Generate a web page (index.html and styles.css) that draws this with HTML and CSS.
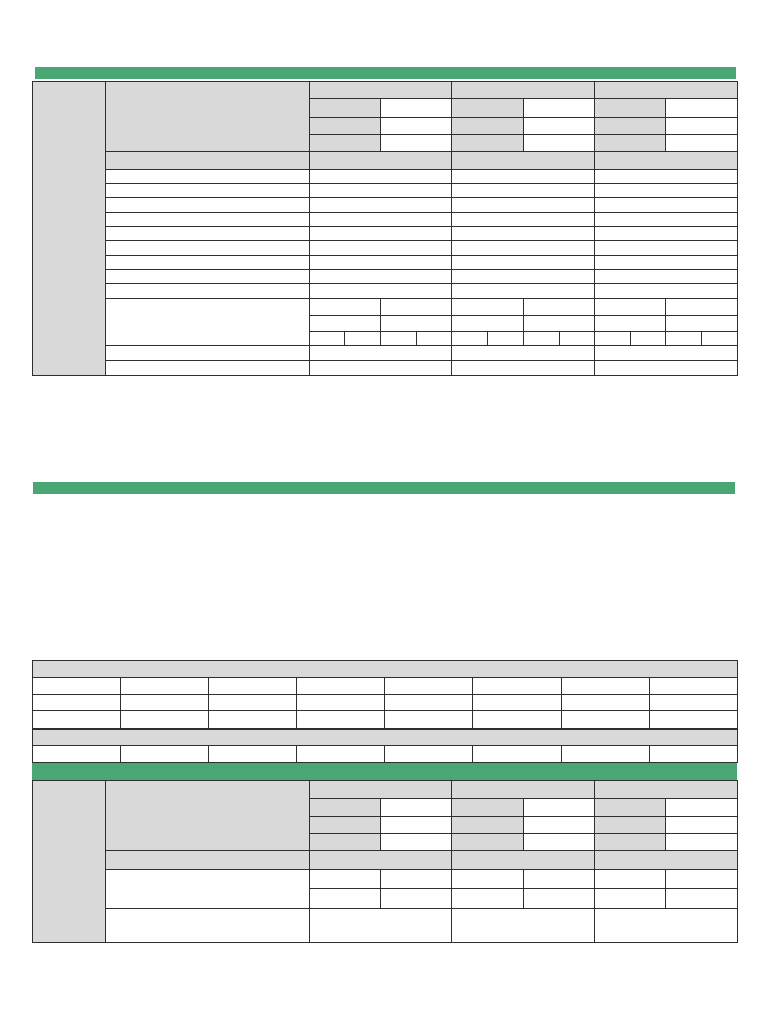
FILE: index.html
```html
<!DOCTYPE html>
<html>
<head>
<meta charset="utf-8">
<link rel="stylesheet" href="styles.css">
</head>
<body>
<div class="page">
  <div class="bar bar-top"></div>
  <table class="grid">
    <colgroup>
      <col class="w73"><col class="w204">
      <col class="w35"><col class="w36"><col class="w36"><col class="w35"><col class="w36"><col class="w36">
      <col class="w36"><col class="w35"><col class="w36"><col class="w35"><col class="w36"><col class="w36">
    </colgroup>
    <tr class="h17"><td class="g" rowspan="19"></td><td class="g" rowspan="4"></td><td class="g" colspan="4"></td><td class="g" colspan="4"></td><td class="g" colspan="4"></td></tr>
    <tr class="h19"><td class="g" colspan="2"></td><td colspan="2"></td><td class="g" colspan="2"></td><td colspan="2"></td><td class="g" colspan="2"></td><td colspan="2"></td></tr>
    <tr class="h17"><td class="g" colspan="2"></td><td colspan="2"></td><td class="g" colspan="2"></td><td colspan="2"></td><td class="g" colspan="2"></td><td colspan="2"></td></tr>
    <tr class="h17"><td class="g" colspan="2"></td><td colspan="2"></td><td class="g" colspan="2"></td><td colspan="2"></td><td class="g" colspan="2"></td><td colspan="2"></td></tr>
    <tr class="h18"><td class="g"></td><td class="g" colspan="4"></td><td class="g" colspan="4"></td><td class="g" colspan="4"></td></tr>
    <tr class="h14"><td></td><td colspan="4"></td><td colspan="4"></td><td colspan="4"></td></tr>
    <tr class="h14"><td></td><td colspan="4"></td><td colspan="4"></td><td colspan="4"></td></tr>
    <tr class="h15"><td></td><td colspan="4"></td><td colspan="4"></td><td colspan="4"></td></tr>
    <tr class="h14"><td></td><td colspan="4"></td><td colspan="4"></td><td colspan="4"></td></tr>
    <tr class="h14"><td></td><td colspan="4"></td><td colspan="4"></td><td colspan="4"></td></tr>
    <tr class="h15"><td></td><td colspan="4"></td><td colspan="4"></td><td colspan="4"></td></tr>
    <tr class="h14"><td></td><td colspan="4"></td><td colspan="4"></td><td colspan="4"></td></tr>
    <tr class="h14"><td></td><td colspan="4"></td><td colspan="4"></td><td colspan="4"></td></tr>
    <tr class="h15"><td></td><td colspan="4"></td><td colspan="4"></td><td colspan="4"></td></tr>
    <tr class="h17"><td rowspan="3"></td><td colspan="2"></td><td colspan="2"></td><td colspan="2"></td><td colspan="2"></td><td colspan="2"></td><td colspan="2"></td></tr>
    <tr class="h16"><td colspan="2"></td><td colspan="2"></td><td colspan="2"></td><td colspan="2"></td><td colspan="2"></td><td colspan="2"></td></tr>
    <tr class="h14"><td></td><td></td><td></td><td></td><td></td><td></td><td></td><td></td><td></td><td></td><td></td><td></td></tr>
    <tr class="h15"><td></td><td colspan="4"></td><td colspan="4"></td><td colspan="4"></td></tr>
    <tr class="h15"><td></td><td colspan="4"></td><td colspan="4"></td><td colspan="4"></td></tr>
  </table>

  <div class="bar bar-mid"></div>

  <table class="grid grid-eight">
    <colgroup>
      <col class="w88"><col class="w88"><col class="w88"><col class="w88"><col class="w88"><col class="w89"><col class="w88"><col class="w88">
    </colgroup>
    <tr class="h17"><td class="g" colspan="8"></td></tr>
    <tr class="h17"><td></td><td></td><td></td><td></td><td></td><td></td><td></td><td></td></tr>
    <tr class="h16"><td></td><td></td><td></td><td></td><td></td><td></td><td></td><td></td></tr>
    <tr class="h18"><td></td><td></td><td></td><td></td><td></td><td></td><td></td><td></td></tr>
    <tr class="h17 thick"><td class="g" colspan="8"></td></tr>
    <tr class="h17"><td></td><td></td><td></td><td></td><td></td><td></td><td></td><td></td></tr>
  </table>
  <div class="bar bar-wide"></div>
  <table class="grid grid-last">
    <colgroup>
      <col class="w73"><col class="w204">
      <col class="w35"><col class="w36"><col class="w36"><col class="w35"><col class="w36"><col class="w36">
      <col class="w36"><col class="w35"><col class="w36"><col class="w35"><col class="w36"><col class="w36">
    </colgroup>
    <tr class="h18"><td class="g" rowspan="8"></td><td class="g" rowspan="4"></td><td class="g" colspan="4"></td><td class="g" colspan="4"></td><td class="g" colspan="4"></td></tr>
    <tr class="h18"><td class="g" colspan="2"></td><td colspan="2"></td><td class="g" colspan="2"></td><td colspan="2"></td><td class="g" colspan="2"></td><td colspan="2"></td></tr>
    <tr class="h17"><td class="g" colspan="2"></td><td colspan="2"></td><td class="g" colspan="2"></td><td colspan="2"></td><td class="g" colspan="2"></td><td colspan="2"></td></tr>
    <tr class="h17"><td class="g" colspan="2"></td><td colspan="2"></td><td class="g" colspan="2"></td><td colspan="2"></td><td class="g" colspan="2"></td><td colspan="2"></td></tr>
    <tr class="h19"><td class="g"></td><td class="g" colspan="4"></td><td class="g" colspan="4"></td><td class="g" colspan="4"></td></tr>
    <tr class="h19"><td rowspan="2"></td><td colspan="2"></td><td colspan="2"></td><td colspan="2"></td><td colspan="2"></td><td colspan="2"></td><td colspan="2"></td></tr>
    <tr class="h20"><td colspan="2"></td><td colspan="2"></td><td colspan="2"></td><td colspan="2"></td><td colspan="2"></td><td colspan="2"></td></tr>
    <tr class="h34"><td></td><td colspan="4"></td><td colspan="4"></td><td colspan="4"></td></tr>
  </table>
</div>
</body>
</html>
```

FILE: styles.css
```css
html, body {
  margin: 0;
  padding: 0;
  background: #ffffff;
  font-family: "Liberation Sans", Arial, sans-serif;
}

.page {
  padding: 67px 0 0 32px;
  width: 706px;
}

.bar {
  background: #4aa673;
}

.bar-top {
  height: 12px;
  margin: 0 2px 2px 3px;
}

.bar-mid {
  height: 12px;
  margin: 106px 3px 166px 1px;
}

.bar-wide {
  height: 17px;
  width: 705px;
}

.grid {
  border-collapse: collapse;
  table-layout: fixed;
  width: 705px;
  border: 1px solid #4a4a4a;
}

.grid td {
  border: 1px solid #2e2e2e;
  padding: 0;
  font-size: 0;
  line-height: 0;
  background: #ffffff;
}

.grid td.g {
  background: #d9d9d9;
}

.grid tr.thick td {
  border-top: 2px solid #2e2e2e;
}

.w73 { width: 73px; }
.w204 { width: 204px; }
.w35 { width: 35px; }
.w36 { width: 36px; }
.w88 { width: 88px; }
.w89 { width: 89px; }

.h14 { height: 14px; }
.h15 { height: 15px; }
.h16 { height: 16px; }
.h17 { height: 17px; }
.h18 { height: 18px; }
.h19 { height: 19px; }
.h20 { height: 20px; }
.h34 { height: 34px; }
```
